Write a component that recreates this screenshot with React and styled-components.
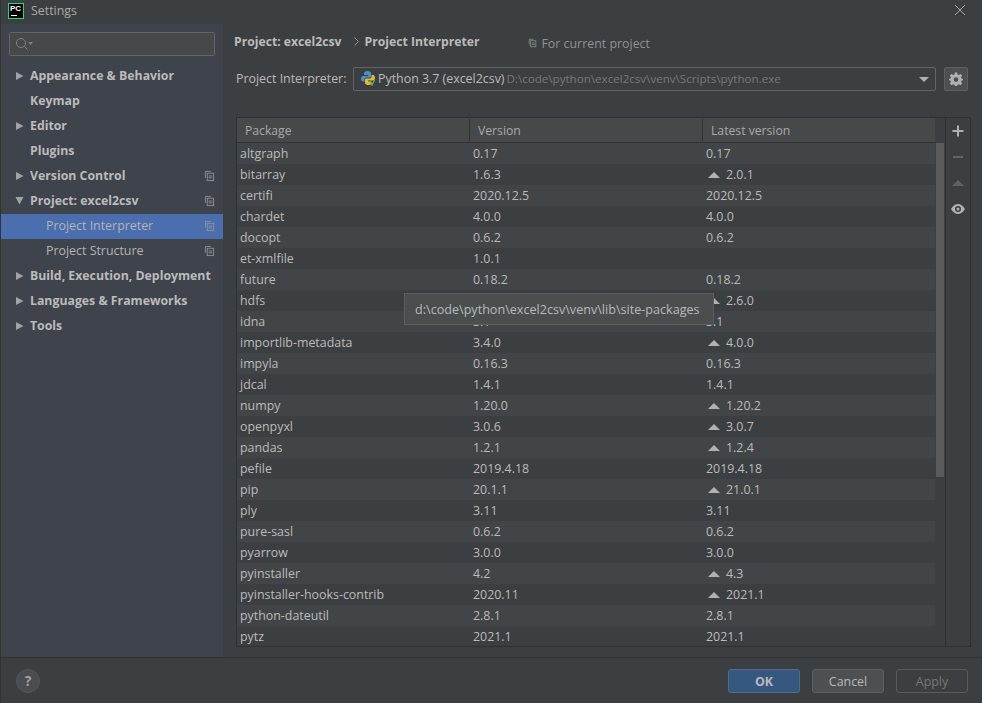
import React from "react";
import styled, { createGlobalStyle } from "styled-components";

const Global = createGlobalStyle`
  html, body { margin: 0; padding: 0; background: #3c3f41; }
  body { font-family: "Open Sans", "Noto Sans", sans-serif; font-size: 12.4px; color: #bbbbbb; }
  * { box-sizing: border-box; }
`;

const Win = styled.div`
  width: 982px; height: 703px; display: flex; flex-direction: column;
  background: #3c3f41; border-left: 1px solid #323232; overflow: hidden; position: relative;
`;
const TitleBar = styled.div`
  height: 24px; flex: none; display: flex; align-items: center; padding: 0 0 4px 7px; gap: 7px; color: #a9a9a9;
  font-size: 12.4px;
`;
const Logo = styled.div`
  width: 16px; height: 16px; margin-top: 2px; background: #000; border: 1px solid #21d789; position: relative;
  color: #fff; font: 700 8px/9px "Liberation Sans", sans-serif; padding-left: 1px;
  &::after { content: ""; position: absolute; left: 2px; bottom: 2px; width: 6px; height: 1px; background: #fff; }
`;
const Close = styled.svg`
  margin-left: auto; margin-right: 16px; width: 12px; height: 12px;
`;
const Body = styled.div`flex: 1; display: flex; min-height: 0;`;
const Side = styled.div`
  width: 222px; flex: none; background: #3e434c; display: flex; flex-direction: column;
`;
const Search = styled.div`
  margin: 8px; height: 24px; background: #45494a; border: 1px solid #646464; border-radius: 2px;
  display: flex; align-items: center; padding-left: 5px;
`;
const TreeRow = styled.div`
  height: 25px; display: flex; align-items: center; position: relative; flex: none;
  padding: 0 0 3px ${p => (p.$child ? 45 : 29)}px;
  background: ${p => (p.$sel ? "#4b6eaf" : "transparent")};
  font-weight: ${p => (p.$child ? 400 : 700)};
  color: ${p => (p.$child ? "#b4b4b4" : "#bbbbbb")};
  font-size: ${p => (p.$child ? 12.4 : 12.3)}px; white-space: nowrap;
`;
const Arrow = styled.svg`position: absolute; left: 14px; top: 7px; width: 9px; height: 10px;`;
const Copy = styled.svg`position: absolute; left: 203px; top: 6px; width: 11px; height: 12px;`;

const Main = styled.div`flex: 1; padding: 0 11px 0 13px; display: flex; flex-direction: column; min-width: 0;`;
const Crumbs = styled.div`
  height: 32px; margin: 1px 0 0 -2px; display: flex; align-items: center; font-weight: 700; font-size: 12.2px; color: #bbbbbb; white-space: nowrap;
`;
const Chev = styled.span`margin: 0 6px 0 12px; display: flex;`;
const Scope = styled.span`
  display: flex; align-items: center; gap: 4px; margin-left: 49px; font-weight: 400; font-size: 12.4px; color: #8f9294; padding-top: 4px;
`;
const InterpRow = styled.div`display: flex; align-items: center; height: 24px; margin-top: 10px;`;
const InterpLabel = styled.span`width: 117px; flex: none; color: #bbbbbb; padding-bottom: 2px; white-space: nowrap;`;
const Combo = styled.div`
  width: 583px; height: 24px; border: 1px solid #646464; border-radius: 2px; background: #3c3f41;
  display: flex; align-items: center; padding: 0 0 2px 6px; gap: 2px; white-space: nowrap; position: relative; overflow: hidden;
`;
const Dim = styled.span`color: #787878; font-size: 11.6px;`;
const Caret = styled.svg`position: absolute; right: 6px; top: 9px; width: 10px; height: 5px;`;
const GearBtn = styled.div`
  width: 24px; height: 24px; margin-left: 8px; background: #4c5052; border: 1px solid #5e6060; border-radius: 2px;
  display: flex; align-items: center; justify-content: center;
`;
const Panel = styled.div`
  margin-top: 26px; width: 735px; height: 530px; border: 1px solid #2f3031; display: flex; flex: none;
`;
const TableWrap = styled.div`width: 698px; flex: none; display: flex; flex-direction: column; overflow: hidden;`;
const Head = styled.div`
  height: 25px; flex: none; background: #45494a; border-bottom: 1px solid #323232; display: grid;
  grid-template-columns: 232px 233px 1fr; align-items: center; color: #a8aaab; font-size: 12.2px;
`;
const HeadCell = styled.div`
  height: 22px; display: flex; align-items: center; padding-left: 8px;
  border-left: ${p => (p.$first ? "none" : "1px solid #323232")};
`;
const Row = styled.div`
  height: 21px; flex: none; display: grid; grid-template-columns: 232px 233px 1fr; align-items: center;
  background: ${p => (p.$odd ? "#3c3f41" : "#414547")}; color: #bbbbbb; white-space: nowrap;
`;
const Cell = styled.div`padding-left: ${p => (p.$first ? 3 : 4)}px; display: flex; align-items: center; gap: 6px;`;
const Up = styled.svg`width: 12px; height: 6px; margin-left: 2px;`;
const Track = styled.div`width: 10px; flex: none; background: #3c3f41; padding-top: 25px;`;
const Thumb = styled.div`width: 8px; height: 334px; margin-left: 1px; background: #595b5d;`;
const Tools = styled.div`
  flex: 1; border-left: 1px solid #2f3031; display: flex; flex-direction: column; align-items: center;
  padding-top: 5px; gap: 10px;
`;
const ToolIcon = styled.svg`width: 16px; height: 16px; flex: none;`;

const Tip = styled.div`
  position: absolute; left: 403px; top: 293px; width: 310px; height: 32px; background: #4a4e4f;
  border: 1px solid #5b5d5e; color: #b8babb; display: flex; align-items: center; padding-left: 10px; white-space: nowrap;
  font-size: 12.6px;
`;
const Footer = styled.div`
  height: 46px; flex: none; border-top: 1px solid #323232; display: flex; align-items: center; padding: 0 14px 0 15px;
`;
const Help = styled.div`
  width: 24px; height: 24px; border-radius: 50%; background: #4a4d4f; border: 1px solid #55585a; color: #a0a2a3;
  display: flex; align-items: center; justify-content: center; font-weight: 700; font-size: 14px;
`;
const Btn = styled.div`
  width: 72px; height: 24px; border-radius: 3px; margin-left: 12px; display: flex; align-items: center; justify-content: center;
  padding-top: 1px;
  background: ${p => (p.$kind === "ok" ? "#365880" : p.$kind === "off" ? "#3c3f41" : "#4c5052")};
  border: 1px solid ${p => (p.$kind === "ok" ? "#4c708c" : p.$kind === "off" ? "#585a5c" : "#5e6060")};
  color: ${p => (p.$kind === "off" ? "#777777" : "#bbbbbb")};
  font-weight: ${p => (p.$kind === "ok" ? 700 : 400)};
`;
const Spacer = styled.div`flex: 1;`;

const tree = [
  { t: "Appearance & Behavior", a: "r" },
  { t: "Keymap" },
  { t: "Editor", a: "r" },
  { t: "Plugins" },
  { t: "Version Control", a: "r", c: 1 },
  { t: "Project: excel2csv", a: "d", c: 1 },
  { t: "Project Interpreter", child: 1, sel: 1, c: 1 },
  { t: "Project Structure", child: 1, c: 1 },
  { t: "Build, Execution, Deployment", a: "r" },
  { t: "Languages & Frameworks", a: "r" },
  { t: "Tools", a: "r" },
];

const pk = [
  ["altgraph", "0.17", "0.17"],
  ["bitarray", "1.6.3", "2.0.1", 1],
  ["certifi", "2020.12.5", "2020.12.5"],
  ["chardet", "4.0.0", "4.0.0"],
  ["docopt", "0.6.2", "0.6.2"],
  ["et-xmlfile", "1.0.1", ""],
  ["future", "0.18.2", "0.18.2"],
  ["hdfs", "2.5.8", "2.6.0", 1],
  ["idna", "3.1", "3.1"],
  ["importlib-metadata", "3.4.0", "4.0.0", 1],
  ["impyla", "0.16.3", "0.16.3"],
  ["jdcal", "1.4.1", "1.4.1"],
  ["numpy", "1.20.0", "1.20.2", 1],
  ["openpyxl", "3.0.6", "3.0.7", 1],
  ["pandas", "1.2.1", "1.2.4", 1],
  ["pefile", "2019.4.18", "2019.4.18"],
  ["pip", "20.1.1", "21.0.1", 1],
  ["ply", "3.11", "3.11"],
  ["pure-sasl", "0.6.2", "0.6.2"],
  ["pyarrow", "3.0.0", "3.0.0"],
  ["pyinstaller", "4.2", "4.3", 1],
  ["pyinstaller-hooks-contrib", "2020.11", "2021.1", 1],
  ["python-dateutil", "2.8.1", "2.8.1"],
  ["pytz", "2021.1", "2021.1"],
];

const CopyGlyph = () => (
  <g fill="none" stroke="#8f9294" strokeWidth="1">
    <path d="M1.5 8.5V1.5H7.5" />
    <rect x="3.5" y="3.5" width="7" height="8" />
    <path d="M5 6.5H9M5 8.5H9" />
  </g>
);

export default function App() {
  return (
    <Win>
      <Global />
      <TitleBar>
        <Logo>PC</Logo>
        <span>Settings</span>
        <Close viewBox="0 0 12 12"><path d="M1 1L11 11M11 1L1 11" stroke="#a9acad" strokeWidth="1" /></Close>
      </TitleBar>
      <Body>
        <Side>
          <Search>
            <svg width="18" height="14" viewBox="0 0 18 14">
              <circle cx="6" cy="6" r="4.5" fill="none" stroke="#7f8284" />
              <path d="M9.5 9.5L12.5 12.5" stroke="#7f8284" />
              <path d="M13 5H18L15.5 8Z" fill="#7f8284" />
            </svg>
          </Search>
          {tree.map(r => (
            <TreeRow key={r.t} $child={r.child} $sel={r.sel}>
              {r.a && (
                <Arrow viewBox="0 0 9 10">
                  {r.a === "r" ? <path d="M1 1L8.5 5L1 9Z" fill="#a0a3a5" /> : <path d="M0.5 1H8.5L4.5 8.5Z" fill="#a0a3a5" />}
                </Arrow>
              )}
              {r.t}
              {r.c && <Copy viewBox="0 0 12 13"><CopyGlyph /></Copy>}
            </TreeRow>
          ))}
        </Side>
        <Main>
          <Crumbs>
            Project: excel2csv
            <Chev>
              <svg width="5" height="9" viewBox="0 0 5 9"><path d="M0.500 0.500L4.500 4.500L0.500 8.500" fill="none" stroke="#8f9294" /></svg>
            </Chev>
            Project Interpreter
            <Scope>
              <svg width="9" height="10" viewBox="0 0 12 13"><CopyGlyph /></svg>
              For current project
            </Scope>
          </Crumbs>
          <InterpRow>
            <InterpLabel>Project Interpreter:</InterpLabel>
            <Combo>
              <svg width="16" height="16" viewBox="0 0 16 16">
                <path d="M7.5 1C5 1 4 2 4 3.5V5H8V6H3C1.500 6 1 7.500 1 9C1 10.500 1.800 11.500 3 11.500H4.500V9.500C4.500 8.500 5.500 7.500 6.500 7.500H9.500C10.500 7.500 11 7 11 6V3C11 2 9.800 1 7.500 1Z" fill="#4a90c8" />
                <path d="M11.500 5V7C11.500 8 10.500 8.500 9.500 8.500H6.500C5.500 8.500 5 9 5 10V13C5 14.500 7 15 8.500 15C10.500 15 11.500 14 11.500 13V11.500H8V10.500H13C14.500 10.500 15 9 15 8C15 6.500 14.500 5 13 5Z" fill="#e5b83a" />
                <path d="M10 11L12 15L14.500 10" fill="none" stroke="#62b543" strokeWidth="1.300" />
              </svg>
              <span>Python 3.7 (excel2csv)</span>
              <Dim>D:\code\python\excel2csv\venv\Scripts\python.exe</Dim>
              <Caret viewBox="0 0 10 5"><path d="M0 0H10L5 5Z" fill="#afb1b3" /></Caret>
            </Combo>
            <GearBtn>
              <svg width="14" height="14" viewBox="0 0 24 24">
                <path fillRule="evenodd" fill="#afb1b3" d="M10 1H14L14.700 4.300L16.800 5.200L19.700 3.400L22.500 6.200L20.700 9.100L21.600 11.300L24 12V14L21.600 14.700L20.700 16.900L22.500 19.800L19.700 22.600L16.800 20.800L14.700 21.700L14 24H10L9.300 21.700L7.200 20.800L4.300 22.600L1.500 19.800L3.300 16.900L2.400 14.700L0 14V12L2.400 11.300L3.300 9.100L1.500 6.200L4.300 3.400L7.200 5.200L9.300 4.300ZM12 9A4 4 0 1 0 12 17A4 4 0 1 0 12 9Z" />
              </svg>
            </GearBtn>
          </InterpRow>
          <Panel>
            <TableWrap>
              <Head>
                <HeadCell $first>Package</HeadCell>
                <HeadCell>Version</HeadCell>
                <HeadCell>Latest version</HeadCell>
              </Head>
              {pk.map((p, i) => (
                <Row key={p[0]} $odd={i % 2 === 1}>
                  <Cell $first>{p[0]}</Cell>
                  <Cell>{p[1]}</Cell>
                  <Cell>
                    {p[3] && <Up viewBox="0 0 12 6"><path d="M0 6L6 0L12 6Z" fill="#afb1b3" /></Up>}
                    {p[2]}
                  </Cell>
                </Row>
              ))}
            </TableWrap>
            <Track><Thumb /></Track>
            <Tools>
              <ToolIcon viewBox="0 0 16 16"><path d="M8 2.500V13.500M2.500 8H13.500" stroke="#afb1b3" strokeWidth="2" /></ToolIcon>
              <ToolIcon viewBox="0 0 16 16"><path d="M3 8H13" stroke="#5f6365" strokeWidth="2" /></ToolIcon>
              <ToolIcon viewBox="0 0 16 16"><path d="M2 11L8 5L14 11Z" fill="#5f6365" /></ToolIcon>
              <ToolIcon viewBox="0 0 16 16">
                <path fillRule="evenodd" fill="#afb1b3" d="M1 8C3 4.500 5.500 3 8 3C10.500 3 13 4.500 15 8C13 11.500 10.500 13 8 13C5.500 13 3 11.500 1 8ZM8 5A3 3 0 1 0 8 11A3 3 0 1 0 8 5ZM8 6.500A1.500 1.500 0 1 1 8 9.500A1.500 1.500 0 1 1 8 6.500Z" />
              </ToolIcon>
            </Tools>
          </Panel>
        </Main>
      </Body>
      <Footer>
        <Help>?</Help>
        <Spacer />
        <Btn $kind="ok">OK</Btn>
        <Btn>Cancel</Btn>
        <Btn $kind="off">Apply</Btn>
      </Footer>
      <Tip>d:\code\python\excel2csv\venv\lib\site-packages</Tip>
    </Win>
  );
}
